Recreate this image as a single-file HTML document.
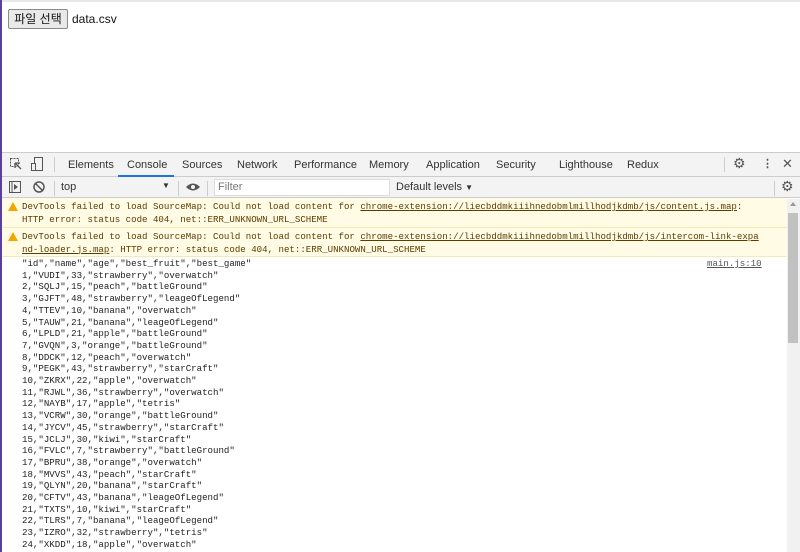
<!DOCTYPE html>
<html><head><meta charset="utf-8"><style>
*{margin:0;padding:0;box-sizing:border-box}
body{width:800px;height:552px;overflow:hidden;background:#fff;font-family:"Liberation Sans","Noto Sans CJK KR",sans-serif;position:relative}
.lb{position:absolute;left:0;top:0;width:2px;height:552px;background:#5b3fa0}
.top{position:absolute;left:2px;top:0;right:0;height:2px;background:#e8e8e8}
.btn{position:absolute;left:8px;top:9px;width:60px;height:20px;border:1px solid #8a8a8a;border-radius:2px;background:#e9e9e9;font-size:12px;text-align:center;line-height:18px;color:#111}
.fn{position:absolute;left:72px;top:12px;font-size:12px;color:#111}
.tabs{position:absolute;left:2px;right:0;top:152px;height:25px;background:#f3f3f3;border-top:1px solid #ccc;border-bottom:1px solid #ccc;font-size:11px;color:#333}
.tabs span{position:absolute;top:6px}
.ul{position:absolute;left:116px;width:56px;bottom:-1px;height:2px;background:#1a73e8}
.bar{position:absolute;left:2px;right:0;top:177px;height:21px;background:#f3f3f3;border-bottom:1px solid #ccc;font-size:11px;color:#333}
.filter{position:absolute;left:212px;top:2px;width:176px;height:17px;background:#fff;border:1px solid #ddd;color:#777;padding-left:3px;line-height:15px}
.warn{position:absolute;left:2px;right:13px;background:#fffbe5;border-bottom:1px solid #f5e9b5;font-family:"Liberation Mono",monospace;font-size:9.1px;color:#5c3c00;line-height:12.5px;padding:3px 0 0 20px}
.warn u{color:#5c3c00}
.tri{position:absolute;left:6px;top:4px;width:0;height:0;border-left:5px solid transparent;border-right:5px solid transparent;border-bottom:9px solid #f2a600}
.log{position:absolute;left:22px;top:258px;font-family:"Liberation Mono",monospace;font-size:9.1px;line-height:11.7px;color:#222;white-space:pre}
.src{position:absolute;left:707px;top:258px;font-family:"Liberation Mono",monospace;font-size:9.1px;line-height:11.7px;color:#555;text-decoration:underline}
.sb{position:absolute;left:787px;top:199px;width:13px;height:353px;background:#f1f1f1}
.th{position:absolute;left:788px;top:213px;width:10px;height:130px;background:#c1c1c1}
.sep{position:absolute;top:4px;width:1px;height:15px;background:#ccc}
</style></head><body>
<div class="lb"></div><div class="top"></div>
<div class="btn">파일 선택</div><div class="fn">data.csv</div>
<div class="tabs">
<svg style="position:absolute;left:8px;top:5px" width="12" height="12"><rect x="0.5" y="0.5" width="8" height="8" fill="none" stroke="#555" stroke-dasharray="2 1"/><path d="M5 5l6 6M5 5v5M5 5h5" stroke="#555" stroke-width="1.3"/></svg>
<svg style="position:absolute;left:29px;top:4px" width="12" height="14"><rect x="3.5" y="0.5" width="8" height="13" fill="none" stroke="#555"/><rect x="0.5" y="6.5" width="4" height="7" fill="#f3f3f3" stroke="#555"/></svg>
<div class="sep" style="left:52px"></div>
<span style="left:66px">Elements</span><span style="left:125px">Console</span><span style="left:180px">Sources</span><span style="left:235px">Network</span><span style="left:292px">Performance</span><span style="left:367px">Memory</span><span style="left:424px">Application</span><span style="left:494px">Security</span><span style="left:557px">Lighthouse</span><span style="left:625px">Redux</span>
<div class="ul"></div>
<div class="sep" style="left:722px"></div>
<span style="left:731px;font-size:14px;top:2px;color:#555">⚙</span><span style="left:760px;font-weight:bold;color:#555;top:4px">⋮</span><span style="left:780px;font-size:13px;top:3px;color:#555">✕</span>
</div>
<div class="bar">
<svg style="position:absolute;left:7px;top:4px" width="12" height="12"><rect x="0.5" y="0.5" width="11" height="11" fill="none" stroke="#555"/><path d="M3 1v10" stroke="#555"/><path d="M5 3l4 3-4 3z" fill="#555"/></svg>
<svg style="position:absolute;left:31px;top:4px" width="12" height="12"><circle cx="6" cy="6" r="5" fill="none" stroke="#555" stroke-width="1.5"/><path d="M2.5 2.5l7 7" stroke="#555" stroke-width="1.5"/></svg>
<div class="sep" style="left:52px"></div>
<span style="position:absolute;left:59px;top:4px">top</span><span style="position:absolute;left:160px;top:4px;font-size:8px">▼</span>
<div class="sep" style="left:176px"></div>
<svg style="position:absolute;left:183px;top:5px" width="16" height="10"><path d="M1 5Q8-2 15 5Q8 12 1 5z" fill="#555"/><circle cx="8" cy="5" r="2" fill="#f3f3f3"/></svg>
<div class="sep" style="left:205px"></div>
<div class="filter">Filter</div>
<span style="position:absolute;left:394px;top:4px">Default levels <span style="font-size:8px">▼</span></span>
<div class="sep" style="left:772px"></div>
<span style="position:absolute;left:779px;top:1px;font-size:14px;color:#555">⚙</span>
</div>
<div class="warn" style="top:198px;height:30px"><div class="tri"></div>DevTools failed to load SourceMap: Could not load content for <u>chrome-extension://liecbddmkiiihnedobmlmillhodjkdmb/js/content.js.map</u>:<br>HTTP error: status code 404, net::ERR_UNKNOWN_URL_SCHEME</div>
<div class="warn" style="top:228px;height:29px"><div class="tri"></div>DevTools failed to load SourceMap: Could not load content for <u>chrome-extension://liecbddmkiiihnedobmlmillhodjkdmb/js/intercom-link-expa</u><br><u>nd-loader.js.map</u>: HTTP error: status code 404, net::ERR_UNKNOWN_URL_SCHEME</div>
<div class="src">main.js:10</div>
<div class="log">"id","name","age","best_fruit","best_game"
1,"VUDI",33,"strawberry","overwatch"
2,"SQLJ",15,"peach","battleGround"
3,"GJFT",48,"strawberry","leageOfLegend"
4,"TTEV",10,"banana","overwatch"
5,"TAUW",21,"banana","leageOfLegend"
6,"LPLD",21,"apple","battleGround"
7,"GVQN",3,"orange","battleGround"
8,"DDCK",12,"peach","overwatch"
9,"PEGK",43,"strawberry","starCraft"
10,"ZKRX",22,"apple","overwatch"
11,"RJWL",36,"strawberry","overwatch"
12,"NAYB",17,"apple","tetris"
13,"VCRW",30,"orange","battleGround"
14,"JYCV",45,"strawberry","starCraft"
15,"JCLJ",30,"kiwi","starCraft"
16,"FVLC",7,"strawberry","battleGround"
17,"BPRU",38,"orange","overwatch"
18,"MVVS",43,"peach","starCraft"
19,"QLYN",20,"banana","starCraft"
20,"CFTV",43,"banana","leageOfLegend"
21,"TXTS",10,"kiwi","starCraft"
22,"TLRS",7,"banana","leageOfLegend"
23,"IZRO",32,"strawberry","tetris"
24,"XKDD",18,"apple","overwatch"</div>
<div class="sb"></div><div class="th"></div>
<div style="position:absolute;left:790px;top:202px;width:0;height:0;border-left:3px solid transparent;border-right:3px solid transparent;border-bottom:4px solid #999"></div>
</body></html>
